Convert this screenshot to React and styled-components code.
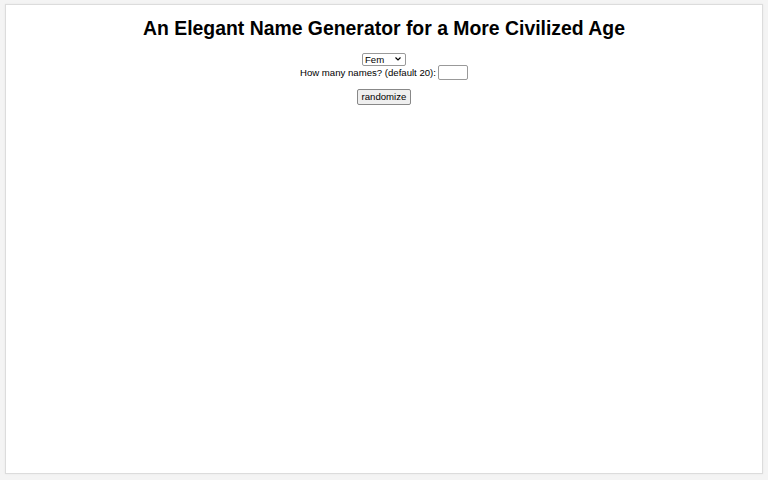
import React, { useState } from 'react';
import styled, { createGlobalStyle } from 'styled-components';

const GlobalStyle = createGlobalStyle`
  html, body {
    margin: 0;
    padding: 0;
    background: #f4f4f4;
    font-family: "Liberation Sans", Arial, sans-serif;
  }
`;

const Page = styled.div`
  padding: 4px 5px 0 5px;
  height: 480px;
  box-sizing: border-box;
`;

const Card = styled.div`
  background: #fff;
  border: 1px solid #dcdcdc;
  box-shadow: 0 0 2px rgba(0, 0, 0, 0.06);
  height: 470px;
  box-sizing: border-box;
  display: flex;
  flex-direction: column;
  align-items: center;
`;

const Title = styled.h1`
  margin: 12px 0 13px;
  font-size: 19.4px;
  line-height: 23px;
  font-weight: bold;
  color: #000;
`;

const Form = styled.form`
  display: flex;
  flex-direction: column;
  align-items: center;
  font-size: 9.6px;
  color: #000;
`;

const SelectWrap = styled.div`
  position: relative;
  width: 44px;
  height: 13px;
`;

const Select = styled.select`
  appearance: none;
  -webkit-appearance: none;
  display: block;
  font-family: "Liberation Sans", Arial, sans-serif;
  font-size: 9.6px;
  line-height: 11px;
  height: 13px;
  width: 44px;
  box-sizing: border-box;
  padding: 0 0 0 2px;
  border: 1px solid #999;
  border-radius: 2px;
  background: #fff;
  color: #000;
`;

const Chevron = styled.svg`
  position: absolute;
  right: 5px;
  top: 4px;
  width: 6px;
  height: 4px;
  pointer-events: none;
`;

const Row = styled.label`
  display: flex;
  align-items: center;
  gap: 2px;
  margin-top: -1px;
`;

const NumberInput = styled.input`
  width: 30px;
  height: 15px;
  box-sizing: border-box;
  border: 1px solid #999;
  border-radius: 2px;
  padding: 0;
`;

const Button = styled.button`
  margin-top: 9px;
  font-family: "Liberation Sans", Arial, sans-serif;
  font-size: 9.6px;
  height: 16px;
  width: 54px;
  padding: 0;
  border: 1px solid #888;
  border-radius: 2px;
  background: #efefef;
  color: #000;
  line-height: 1;
`;

export default function App() {
  const [gender, setGender] = useState('fem');
  const [count, setCount] = useState('');

  return (
    <>
      <GlobalStyle />
      <Page>
        <Card>
          <Title>An Elegant Name Generator for a More Civilized Age</Title>
          <Form onSubmit={(e) => e.preventDefault()}>
            <SelectWrap>
              <Select value={gender} onChange={(e) => setGender(e.target.value)}>
                <option value="fem">Fem</option>
                <option value="masc">Masc</option>
                <option value="any">Any</option>
              </Select>
              <Chevron viewBox="0 0 6 4">
                <path d="M0.5 0.5 L3 3 L5.5 0.5" fill="none" stroke="#000" strokeWidth="1.2" />
              </Chevron>
            </SelectWrap>
            <Row>
              How many names? (default 20):
              <NumberInput value={count} onChange={(e) => setCount(e.target.value)} />
            </Row>
            <Button type="submit">randomize</Button>
          </Form>
        </Card>
      </Page>
    </>
  );
}
